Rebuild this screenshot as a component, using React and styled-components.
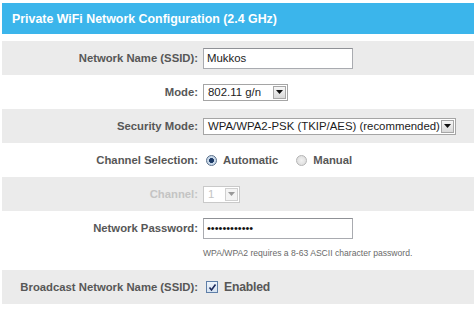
import React from "react";
import styled, { createGlobalStyle } from "styled-components";

const GlobalStyle = createGlobalStyle`
    html, body {
        margin: 0;
        padding: 0;
        background: #ffffff;
        font-family: "Liberation Sans", Arial, sans-serif;
    }
`;

const fields = [
    { label: "Network Name (SSID):", kind: "text", value: "Mukkos", shaded: true },
    { label: "Mode:", kind: "select", value: "802.11 g/n", width: 85 },
    { label: "Security Mode:", kind: "select", value: "WPA/WPA2-PSK (TKIP/AES) (recommended)", width: 253, shaded: true },
    { label: "Channel Selection:", kind: "radio" },
    { label: "Channel:", kind: "select", value: "1", width: 37, disabled: true, shaded: true },
    { label: "Network Password:", kind: "password", value: "••••••••••••" },
];

class App extends React.Component {
    renderControl(field) {
        switch (field.kind) {
            case "text":
                return <TextBox>{field.value}</TextBox>;
            case "password":
                return <TextBox><Dots>{field.value}</Dots></TextBox>;
            case "select":
                return <Select width={field.width} disabled={field.disabled}>
                    <span>{field.value}</span>
                    <Arrow disabled={field.disabled}>
                        <svg width="7" height="4" viewBox="0 0 7 4"><path d="M0 0h7L3.5 4z" fill={field.disabled ? "#9a9a9a" : "#111"}/></svg>
                    </Arrow>
                </Select>;
            case "radio":
                return <Options>
                    <Option><Radio checked/>Automatic</Option>
                    <Option><Radio/>Manual</Option>
                </Options>;
            default:
                return null;
        }
    }

    render() {
        return <Page>
            <GlobalStyle/>
            <Header>Private WiFi Network Configuration (2.4 GHz)</Header>
            <Form>
                {fields.map(f =>
                    <Row key={f.label} shaded={f.shaded}>
                        <Label disabled={f.disabled}>{f.label}</Label>
                        {this.renderControl(f)}
                    </Row>
                )}
                <Hint>WPA/WPA2 requires a 8-63 ASCII character password.</Hint>
                <Row shaded tall>
                    <Label>Broadcast Network Name (SSID):</Label>
                    <Option>
                        <Check>
                            <svg width="9" height="9" viewBox="0 0 9 9"><path d="M1.5 4.5l2 2.5L7.5 1.5" stroke="#1d2a5c" strokeWidth="1.6" fill="none"/></svg>
                        </Check>
                        <Enabled>Enabled</Enabled>
                    </Option>
                </Row>
            </Form>
        </Page>
    }
}

const Page = styled.div`
    padding: 3px 0 0 2px;
    width: 472px;
`

const Header = styled.div`
    height: 31px;
    background: #3bb5eb;
    color: #ffffff;
    font-weight: bold;
    font-size: 12.4px;
    display: flex;
    align-items: center;
    padding-left: 10px;
`

const Form = styled.div`
    display: flex;
    flex-direction: column;
    margin-top: 7px;
`

const Row = styled.div`
    display: grid;
    grid-template-columns: 196px 1fr;
    column-gap: 5px;
    align-items: center;
    height: 34px;
    background: ${props => props.shaded ? "#ebebeb" : "#ffffff"};
    margin-top: ${props => props.tall ? "9px" : "0"};
`

const Label = styled.div`
    text-align: right;
    font-weight: bold;
    font-size: 11.3px;
    color: ${props => props.disabled ? "#c4c4c4" : "#575757"};
`

const TextBox = styled.div`
    width: 145px;
    height: 19px;
    border: 1px solid #a9abb0;
    border-top-color: #8f9196;
    background: #ffffff;
    box-sizing: content-box;
    display: flex;
    align-items: center;
    padding-left: 3px;
    font-size: 11.4px;
    color: #222;
`

const Dots = styled.span`
    font-size: 11px;
    color: #111;
`

const Select = styled.div`
    width: ${props => props.width}px;
    height: 17px;
    box-sizing: border-box;
    border: 1px solid ${props => props.disabled ? "#c9c9c9" : "#a5a5a5"};
    background: #ffffff;
    display: flex;
    align-items: center;
    justify-content: space-between;
    padding: 0 1px 0 4px;
    font-size: 11.4px;
    color: ${props => props.disabled ? "#c4c4c4" : "#1c1c1c"};
    white-space: nowrap;
`

const Arrow = styled.div`
    width: 11px;
    height: 11px;
    border: 1px solid ${props => props.disabled ? "#d0d0d0" : "#a7a7a7"};
    background: ${props => props.disabled ? "#f4f4f4" : "linear-gradient(#f6f6f6, #d9d9d9)"};
    display: flex;
    align-items: center;
    justify-content: center;
`

const Options = styled.div`
    display: flex;
    align-items: center;
    gap: 15px;
`

const Option = styled.label`
    display: flex;
    align-items: center;
    gap: 6px;
    font-weight: bold;
    font-size: 11.3px;
    color: #575757;
    padding-left: 3px;
`

const Radio = styled.span`
    width: 9px;
    height: 9px;
    border-radius: 50%;
    border: 1px solid ${props => props.checked ? "#5a6f8a" : "#b5b5b5"};
    background: ${props => props.checked
        ? "radial-gradient(circle, #1d3a66 0 2.2px, #c9d9ea 2.7px)"
        : "radial-gradient(circle, #f2f2f2, #d8d8d8)"};
`

const Check = styled.span`
    width: 10px;
    height: 10px;
    border: 1px solid #5f7fa8;
    background: linear-gradient(#eef4fb, #d6e3f1);
    display: flex;
    align-items: center;
    justify-content: center;
`

const Enabled = styled.span`
    font-size: 12.2px;
    letter-spacing: -0.2px;
`

const Hint = styled.div`
    padding-left: 201px;
    height: 16px;
    font-size: 8.6px;
    color: #6a6a6a;
    display: flex;
    align-items: center;
`

export default App;
